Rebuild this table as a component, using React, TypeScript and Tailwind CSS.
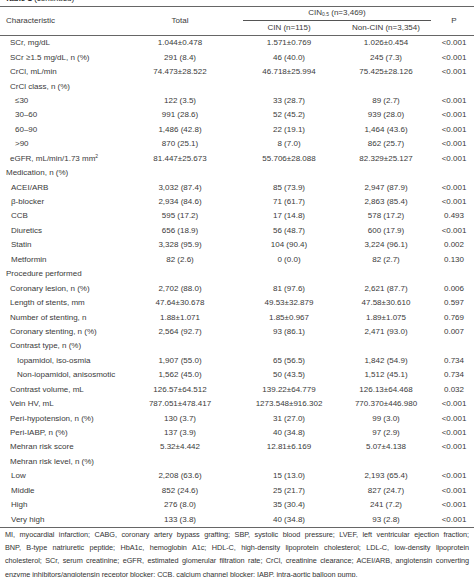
import React from "react";

type Row = { label: string; indent: number; vals?: [string, string, string, string] };

const rows: Row[] = [
  { label: "SCr, mg/dL", indent: 10, vals: ["1.044±0.478", "1.571±0.769", "1.026±0.454", "<0.001"] },
  { label: "SCr ≥1.5 mg/dL, n (%)", indent: 10, vals: ["291 (8.4)", "46 (40.0)", "245 (7.3)", "<0.001"] },
  { label: "CrCl, mL/min", indent: 10, vals: ["74.473±28.522", "46.718±25.994", "75.425±28.126", "<0.001"] },
  { label: "CrCl class, n (%)", indent: 10 },
  { label: "≤30", indent: 15, vals: ["122 (3.5)", "33 (28.7)", "89 (2.7)", "<0.001"] },
  { label: "30–60", indent: 15, vals: ["991 (28.6)", "52 (45.2)", "939 (28.0)", "<0.001"] },
  { label: "60–90", indent: 15, vals: ["1,486 (42.8)", "22 (19.1)", "1,464 (43.6)", "<0.001"] },
  { label: ">90", indent: 15, vals: ["870 (25.1)", "8 (7.0)", "862 (25.7)", "<0.001"] },
  { label: "eGFR, mL/min/1.73 mm", indent: 10, vals: ["81.447±25.673", "55.706±28.088", "82.329±25.127", "<0.001"] },
  { label: "Medication, n (%)", indent: 6 },
  { label: "ACEI/ARB", indent: 11, vals: ["3,032 (87.4)", "85 (73.9)", "2,947 (87.9)", "<0.001"] },
  { label: "β-blocker", indent: 11, vals: ["2,934 (84.6)", "71 (61.7)", "2,863 (85.4)", "<0.001"] },
  { label: "CCB", indent: 11, vals: ["595 (17.2)", "17 (14.8)", "578 (17.2)", "0.493"] },
  { label: "Diuretics", indent: 11, vals: ["656 (18.9)", "56 (48.7)", "600 (17.9)", "<0.001"] },
  { label: "Statin", indent: 11, vals: ["3,328 (95.9)", "104 (90.4)", "3,224 (96.1)", "0.002"] },
  { label: "Metformin", indent: 11, vals: ["82 (2.6)", "0 (0.0)", "82 (2.7)", "0.130"] },
  { label: "Procedure performed", indent: 6 },
  { label: "Coronary lesion, n (%)", indent: 10, vals: ["2,702 (88.0)", "81 (97.6)", "2,621 (87.7)", "0.006"] },
  { label: "Length of stents, mm", indent: 10, vals: ["47.64±30.678", "49.53±32.879", "47.58±30.610", "0.597"] },
  { label: "Number of stenting, n", indent: 10, vals: ["1.88±1.071", "1.85±0.967", "1.89±1.075", "0.769"] },
  { label: "Coronary stenting, n (%)", indent: 10, vals: ["2,564 (92.7)", "93 (86.1)", "2,471 (93.0)", "0.007"] },
  { label: "Contrast type, n (%)", indent: 10 },
  { label: "Iopamidol, iso-osmia", indent: 17, vals: ["1,907 (55.0)", "65 (56.5)", "1,842 (54.9)", "0.734"] },
  { label: "Non-iopamidol, anisosmotic", indent: 17, vals: ["1,562 (45.0)", "50 (43.5)", "1,512 (45.1)", "0.734"] },
  { label: "Contrast volume, mL", indent: 10, vals: ["126.57±64.512", "139.22±64.779", "126.13±64.468", "0.032"] },
  { label: "Vein HV, mL", indent: 10, vals: ["787.051±478.417", "1273.548±916.302", "770.370±446.980", "<0.001"] },
  { label: "Peri-hypotension, n (%)", indent: 10, vals: ["130 (3.7)", "31 (27.0)", "99 (3.0)", "<0.001"] },
  { label: "Peri-IABP, n (%)", indent: 10, vals: ["137 (3.9)", "40 (34.8)", "97 (2.9)", "<0.001"] },
  { label: "Mehran risk score", indent: 10, vals: ["5.32±4.442", "12.81±6.169", "5.07±4.138", "<0.001"] },
  { label: "Mehran risk level, n (%)", indent: 10 },
  { label: "Low", indent: 11, vals: ["2,208 (63.6)", "15 (13.0)", "2,193 (65.4)", "<0.001"] },
  { label: "Middle", indent: 11, vals: ["852 (24.6)", "25 (21.7)", "827 (24.7)", "<0.001"] },
  { label: "High", indent: 11, vals: ["276 (8.0)", "35 (30.4)", "241 (7.2)", "<0.001"] },
  { label: "Very high", indent: 11, vals: ["133 (3.8)", "40 (34.8)", "93 (2.8)", "<0.001"] },
];

const indentClass: Record<number, string> = {
  6: "pl-[6px]",
  10: "pl-[10px]",
  11: "pl-[11px]",
  15: "pl-[15px]",
  17: "pl-[17px]",
};

const foot = [
  "MI, myocardial infarction; CABG, coronary artery bypass grafting; SBP, systolic blood pressure; LVEF, left ventricular ejection fraction;",
  "BNP, B-type natriuretic peptide; HbA1c, hemoglobin A1c; HDL-C, high-density lipoprotein cholesterol; LDL-C, low-density lipoprotein",
  "cholesterol; SCr, serum creatinine; eGFR, estimated glomerular filtration rate; CrCl, creatinine clearance; ACEI/ARB, angiotensin converting",
  "enzyme inhibitors/angiotensin receptor blocker; CCB, calcium channel blocker; IABP, intra-aortic balloon pump.",
];

export default function App() {
  return (
    <div
      className="w-[474px] h-[577px] overflow-hidden bg-white text-[#3a3a3a] text-[8px]"
      style={{ fontFamily: '"Liberation Sans", Arial, sans-serif' }}
    >
      <div className="h-[6px] overflow-hidden flex items-end pl-[5px] pb-[3px]">
        <div className="leading-[8px] text-[8px] shrink-0 text-[#222] whitespace-nowrap">
          <span className="font-bold">Table 1</span> (continued)
        </div>
      </div>
      <div className="border-t border-[#666]" />
      {/* header */}
      <div className="grid grid-cols-[120px_120px_98px_96px_40px] grid-rows-[14px_14px] border-b border-[#666]">
        <div className="row-span-2 flex items-center pl-[6px]">Characteristic</div>
        <div className="row-span-2 flex items-center justify-center">Total</div>
        <div className="col-span-2 flex items-end justify-center pb-[3px] mx-[3px] border-b border-[#555] leading-none">
          <span>
            CIN<sub className="text-[5px]">0.5</sub> (n=3,469)
          </span>
        </div>
        <div className="row-span-2 flex items-center justify-center">P</div>
        <div className="flex items-center justify-center">CIN (n=115)</div>
        <div className="flex items-center justify-center">Non-CIN (n=3,354)</div>
      </div>
      {/* body */}
      <div className="flex flex-col">
        {rows.map((r, i) => (
          <div key={i} className="grid grid-cols-[120px_120px_98px_96px_40px] h-[14.45px] items-center leading-none">
            <div className={"whitespace-nowrap " + indentClass[r.indent]}>
              {r.label}
              {r.label.startsWith("eGFR") && <sup className="text-[5px]">2</sup>}
            </div>
            {r.vals ? (
              <>
                <div className="text-center whitespace-nowrap">{r.vals[0]}</div>
                <div className="text-center whitespace-nowrap">{r.vals[1]}</div>
                <div className="text-center whitespace-nowrap">{r.vals[2]}</div>
                <div className="text-center whitespace-nowrap">{r.vals[3]}</div>
              </>
            ) : null}
          </div>
        ))}
      </div>
      <div className="border-t border-[#666]" />
      <div className="px-[5px] leading-[13.3px] text-[7.3px] tracking-[-0.05px] text-[#333]">
        {foot.map((l, i) => (
          <div
            key={i}
            className={
              i < foot.length - 1
                ? "text-justify [text-align-last:justify]"
                : "text-left"
            }
          >
            {l}
          </div>
        ))}
      </div>
    </div>
  );
}
